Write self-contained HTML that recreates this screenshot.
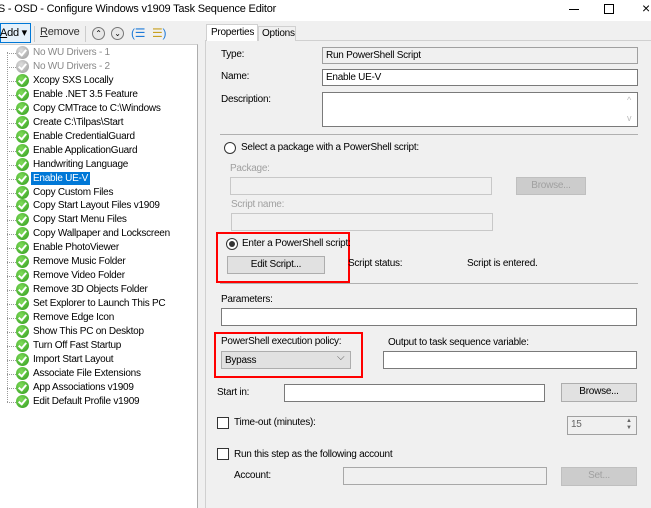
<!DOCTYPE html>
<html><head><meta charset="utf-8"><style>
*{box-sizing:border-box;margin:0;padding:0}
body{width:651px;height:508px;overflow:hidden;background:#f0f0f0;font-family:"Liberation Sans",sans-serif;font-size:10px;letter-spacing:-0.25px;color:#000;position:relative}
.a{position:absolute;white-space:nowrap}
.f{position:absolute;background:#fff;border:1px solid #7a7a7a}
.fd{position:absolute;background:#f0f0f0;border:1px solid #c8c8c8}
.b{position:absolute;background:#e1e1e1;border:1px solid #adadad;text-align:center;line-height:16px}
.bd{position:absolute;background:#cccccc;border:1px solid #bfbfbf;text-align:center;line-height:16px;color:#a0a0a0}
.g{color:#a0a0a0}
.red{position:absolute;border:2px solid #ff0000}
.ti{position:absolute;left:33px;white-space:nowrap;line-height:13px}
.ic{position:absolute;left:16px;width:13px;height:13px;border-radius:50%;background:radial-gradient(circle at 40% 35%,#7fdc5a,#2f9a1c)}
.ic::after{content:"";position:absolute;left:4px;top:2px;width:3px;height:6px;border:solid #fff;border-width:0 2px 2px 0;transform:rotate(40deg)}
.ic.gr{background:radial-gradient(circle at 40% 35%,#ddd,#999)}
.dl{position:absolute;left:7px;width:9px;border-top:1px dotted #999}
.rad{position:absolute;width:12px;height:12px;border:1px solid #333;border-radius:50%;background:#fff}
.chk{position:absolute;width:12px;height:12px;border:1px solid #333;background:#fff}
</style></head><body>
<div class="a" style="left:0;top:0;width:651px;height:21px;background:#fff"></div>
<div class="a" style="left:-4px;top:3px;font-size:11px;letter-spacing:-0.2px">'S - OSD - Configure Windows v1909 Task Sequence Editor</div>
<div class="a" style="left:569px;top:9px;width:10px;border-top:1px solid #000"></div>
<div class="a" style="left:604px;top:4px;width:10px;height:10px;border:1px solid #000"></div>
<div class="a" style="left:642px;top:0px;font-size:14px">×</div>
<!-- toolbar -->
<div class="a" style="left:0;top:23px;width:31px;height:20px;border:1px solid #0078d7;background:#e5f1fb"></div>
<div class="a" style="left:0;top:26px;font-size:11px;color:#000"><u>A</u>dd ▾</div>
<div class="a" style="left:34px;top:26px;height:16px;border-left:1px solid #ccc"></div>
<div class="a" style="left:40px;top:26px;font-size:11px;color:#333"><u>R</u>emove</div>
<div class="a" style="left:85px;top:26px;height:16px;border-left:1px solid #ccc"></div>
<div class="a" style="left:92px;top:27px;width:13px;height:13px;border-radius:50%;border:1px solid #777;background:#e8e8e8;font-size:8px;text-align:center;line-height:11px">⌃</div>
<div class="a" style="left:111px;top:27px;width:13px;height:13px;border-radius:50%;border:1px solid #777;background:#e8e8e8;font-size:8px;text-align:center;line-height:11px">⌄</div>
<div class="a" style="left:131px;top:26px;color:#1e7ad8;font-size:12px">(☰</div>
<div class="a" style="left:152px;top:26px;color:#c8a020;font-size:12px">☰<span style="color:#1e7ad8">)</span></div>
<!-- tree -->
<div class="a" style="left:0;top:44px;width:198px;height:464px;background:#fff;border-right:1px solid #adadad;border-top:1px solid #d0d0d0"></div>
<div class="a" style="left:7px;top:52px;height:350px;border-left:1px dotted #999"></div>
<div id="tree"></div>
<script>
var items=["No WU Drivers - 1","No WU Drivers - 2","Xcopy SXS Locally","Enable .NET 3.5 Feature","Copy CMTrace to C:\\Windows","Create C:\\Tilpas\\Start","Enable CredentialGuard","Enable ApplicationGuard","Handwriting Language","Enable UE-V","Copy Custom Files","Copy Start Layout Files v1909","Copy Start Menu Files","Copy Wallpaper and Lockscreen","Enable PhotoViewer","Remove Music Folder","Remove Video Folder","Remove 3D Objects Folder","Set Explorer to Launch This PC","Remove Edge Icon","Show This PC on Desktop","Turn Off Fast Startup","Import Start Layout","Associate File Extensions","App Associations v1909","Edit Default Profile v1909"];
var h="";
for(var i=0;i<items.length;i++){var y=46+i*13.95;var g=i<2;
h+='<div class="dl" style="top:'+(y+7)+'px"></div><div class="ic'+(g?' gr':'')+'" style="top:'+y+'px"></div>';
var st=g?'color:#888;':'';
if(i==9)st='color:#fff;background:#0078d7;left:31px;padding:0 2px;';
h+='<div class="ti" style="top:'+(y)+'px;'+st+'">'+items[i]+'</div>';}
document.getElementById('tree').innerHTML=h;
</script>
<!-- tabs -->
<div class="a" style="left:205px;top:40px;width:446px;height:468px;border-left:1px solid #d0d0d0;border-top:1px solid #d0d0d0"></div>
<div class="a" style="left:206px;top:24px;width:52px;height:17px;background:#fff;border:1px solid #d0d0d0;border-bottom:none;padding:2px 0 0 4px">Properties</div>
<div class="a" style="left:258px;top:26px;width:38px;height:15px;background:#f0f0f0;border:1px solid #d0d0d0;border-bottom:none;padding:1px 0 0 3px">Options</div>
<div class="a" style="left:221px;top:49px">Type:</div>
<div class="fd" style="left:322px;top:47px;width:316px;height:17px;background:#f0f0f0;border-color:#a0a0a0;padding:2px 3px">Run PowerShell Script</div>
<div class="a" style="left:221px;top:71px">Name:</div>
<div class="f" style="left:322px;top:69px;width:316px;height:17px;padding:2px 3px">Enable UE-V</div>
<div class="a" style="left:221px;top:94px">Description:</div>
<div class="f" style="left:322px;top:92px;width:316px;height:35px"></div>
<div class="a" style="left:627px;top:95px;color:#bbb;font-size:9px">^</div>
<div class="a" style="left:627px;top:113px;color:#bbb;font-size:9px">v</div>
<div class="a" style="left:220px;top:134px;width:418px;border-top:1px solid #b0b0b0"></div>
<div class="rad" style="left:224px;top:142px"></div>
<div class="a" style="left:241px;top:142px">Select a package with a PowerShell script:</div>
<div class="a g" style="left:230px;top:163px">Package:</div>
<div class="fd" style="left:230px;top:177px;width:262px;height:18px"></div>
<div class="bd" style="left:516px;top:177px;width:70px;height:18px">Browse...</div>
<div class="a g" style="left:231px;top:199px">Script name:</div>
<div class="fd" style="left:231px;top:213px;width:262px;height:18px"></div>
<div class="red" style="left:216px;top:232px;width:134px;height:51px"></div>
<div class="rad" style="left:226px;top:238px"></div>
<div class="a" style="left:229px;top:241px;width:6px;height:6px;border-radius:50%;background:#333"></div>
<div class="a" style="left:242px;top:238px">Enter a PowerShell script:</div>
<div class="b" style="left:227px;top:256px;width:98px;height:18px">Edit Script...</div>
<div class="a" style="left:348px;top:258px">Script status:</div>
<div class="a" style="left:467px;top:258px">Script is entered.</div>
<div class="a" style="left:220px;top:283px;width:418px;border-top:1px solid #b0b0b0"></div>
<div class="a" style="left:221px;top:294px">Parameters:</div>
<div class="f" style="left:221px;top:308px;width:416px;height:18px"></div>
<div class="red" style="left:214px;top:332px;width:149px;height:46px"></div>
<div class="a" style="left:221px;top:336px">PowerShell execution policy:</div>
<div class="a" style="left:221px;top:351px;width:130px;height:18px;background:#e1e1e1;border:1px solid #adadad;padding:3px 3px">Bypass</div>
<div class="a" style="left:337px;top:352px;font-size:10px;color:#555">⌵</div>
<div class="a" style="left:388px;top:337px">Output to task sequence variable:</div>
<div class="f" style="left:383px;top:351px;width:254px;height:18px"></div>
<div class="a" style="left:217px;top:387px">Start in:</div>
<div class="f" style="left:284px;top:384px;width:261px;height:18px"></div>
<div class="b" style="left:561px;top:383px;width:76px;height:19px">Browse...</div>
<div class="chk" style="left:217px;top:417px"></div>
<div class="a" style="left:234px;top:417px">Time-out (minutes):</div>
<div class="fd" style="left:567px;top:416px;width:70px;height:19px;border-color:#a0a0a0;padding:2px 3px;color:#666">15</div>
<div class="a" style="left:626px;top:418px;font-size:6px;color:#666;line-height:7px">▲<br>▼</div>
<div class="chk" style="left:217px;top:448px"></div>
<div class="a" style="left:234px;top:449px">Run this step as the following account</div>
<div class="a" style="left:234px;top:470px">Account:</div>
<div class="fd" style="left:343px;top:467px;width:204px;height:18px;border-color:#a8a8a8"></div>
<div class="bd" style="left:561px;top:467px;width:76px;height:19px">Set...</div>
</body></html>
